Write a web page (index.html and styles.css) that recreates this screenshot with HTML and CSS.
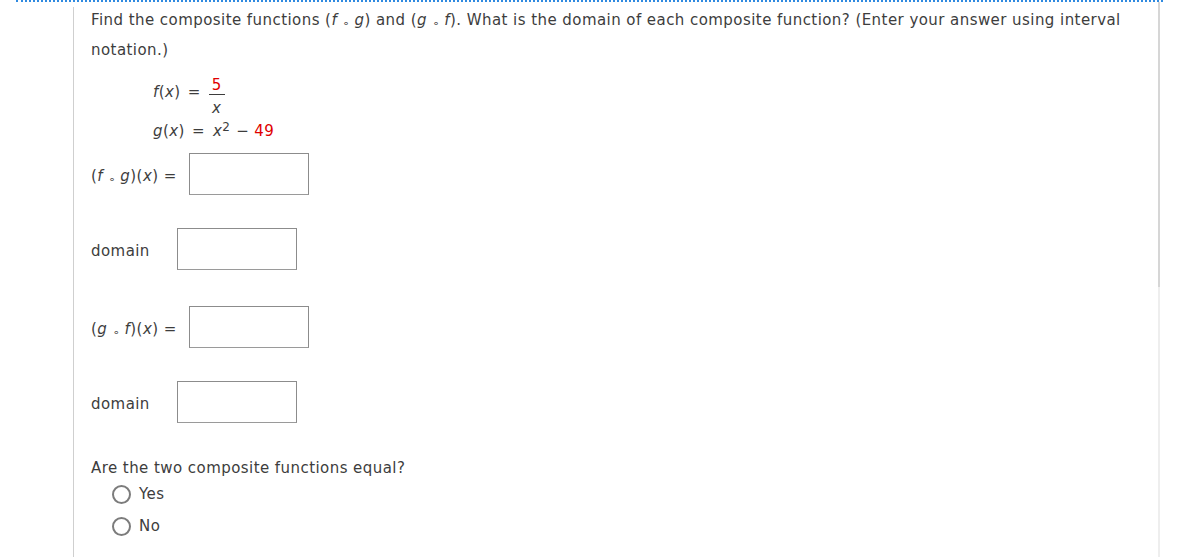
FILE: index.html
```html
<!DOCTYPE html>
<html lang="en">
<head>
<meta charset="utf-8">
<title>Composite functions</title>
<link rel="stylesheet" href="styles.css">
</head>
<body>
<div class="rule"></div>
<main class="panel">
  <p class="prompt">Find the composite functions (<i>f</i> <span class="comp">∘</span> <i>g</i>) and (<i>g</i> <span class="comp">∘</span> <i>f</i>). What is the domain of each composite function? (Enter your answer using interval notation.)</p>

  <div class="defs">
    <div class="def def-f">
      <span class="lhs"><i>f</i>(<i>x</i>)</span>
      <span class="eq">=</span>
      <span class="frac">
        <span class="num red">5</span>
        <span class="bar"></span>
        <span class="den"><i>x</i></span>
      </span>
    </div>
    <div class="def def-g">
      <span class="lhs"><i>g</i>(<i>x</i>)</span>
      <span class="eq">=</span>
      <span class="term"><i>x</i><sup>2</sup></span>
      <span class="minus">−</span>
      <span class="red">49</span>
    </div>
  </div>

  <div class="answer answer-fn first">
    <span class="label">(<i>f</i> <span class="comp">∘</span> <i>g</i>)(<i>x</i>) =</span>
    <span class="box"></span>
  </div>
  <div class="answer answer-domain">
    <span class="label">domain</span>
    <span class="box"></span>
  </div>
  <div class="answer answer-fn second">
    <span class="label">(<i>g</i> <span class="comp">∘</span> <i>f</i>)(<i>x</i>) =</span>
    <span class="box"></span>
  </div>
  <div class="answer answer-domain">
    <span class="label">domain</span>
    <span class="box"></span>
  </div>

  <p class="question">Are the two composite functions equal?</p>
  <ul class="choices">
    <li><span class="radio"></span>Yes</li>
    <li><span class="radio"></span>No</li>
  </ul>
</main>
</body>
</html>
```

FILE: styles.css
```css
html, body {
  margin: 0;
  padding: 0;
  background: #ffffff;
}

body {
  font-family: "DejaVu Sans", Verdana, sans-serif;
  font-size: 15px;
  letter-spacing: 0.44px;
  color: #3d3d3d;
}

.rule {
  margin-left: 16px;
  width: 1147px;
  height: 0;
  border-top: 2px dotted #2f8ae0;
}

.panel {
  margin-left: 73px;
  width: 1087px;
  min-height: 555px;
  box-sizing: border-box;
  padding: 3px 0 0 18px;
  background:
    linear-gradient(#cfcfcf, #cfcfcf) left 0 top 5px / 1px 100% no-repeat,
    linear-gradient(#d6d6d6, #d6d6d6) right 0 top 0 / 2px 285px no-repeat,
    linear-gradient(#eeeeee, #eeeeee) right 0 top 0 / 2px 100% no-repeat;
}

i {
  font-style: italic;
}

.red {
  color: #e00000;
}

.comp {
  font-size: 11px;
  line-height: 0;
  letter-spacing: 0;
  vertical-align: -2px;
}

.prompt {
  margin: 0;
  max-width: 1060px;
  line-height: 30px;
}

.defs {
  margin: 12px 0 0 62px;
  display: flex;
  flex-direction: column;
  gap: 7px;
}

.def {
  display: flex;
  align-items: flex-start;
  line-height: 16px;
}

.def-f .lhs,
.def-f .eq {
  margin-top: 7px;
}

.eq {
  margin: 0 8px 0 7px;
}

.frac {
  display: inline-flex;
  flex-direction: column;
  align-items: center;
  width: 16px;
}

.num {
  display: block;
  padding-bottom: 1px;
}

.bar {
  display: block;
  width: 16px;
  height: 1px;
  background: #3d3d3d;
}

.den {
  display: block;
  padding-top: 5px;
}

.term sup {
  font-size: 12px;
  line-height: 0;
  vertical-align: 5px;
}

.minus {
  margin: 0 5px 0 6px;
}

.answer {
  display: flex;
  align-items: center;
  line-height: 16px;
}

.answer .label {
  padding-top: 3px;
}

.answer.first {
  margin-top: 14px;
}

.answer-domain {
  margin-top: 33px;
}

.answer.second {
  margin-top: 36px;
}

.answer-fn .label {
  width: 98px;
}

.answer-domain .label {
  width: 86px;
}

.box {
  display: block;
  width: 120px;
  height: 42px;
  box-sizing: border-box;
  border: 1px solid #8c8c8c;
  border-bottom-color: #9a9a9a;
  background: #fff;
}

.question {
  margin: 36px 0 0;
  line-height: 19px;
}

.choices {
  list-style: none;
  margin: 0;
  padding: 0 0 0 21px;
}

.choices li {
  display: flex;
  align-items: center;
  height: 32px;
}

.radio {
  display: block;
  width: 19px;
  height: 19px;
  box-sizing: border-box;
  border: 2px solid #7c7c7c;
  border-radius: 50%;
  margin-right: 8px;
}
```
